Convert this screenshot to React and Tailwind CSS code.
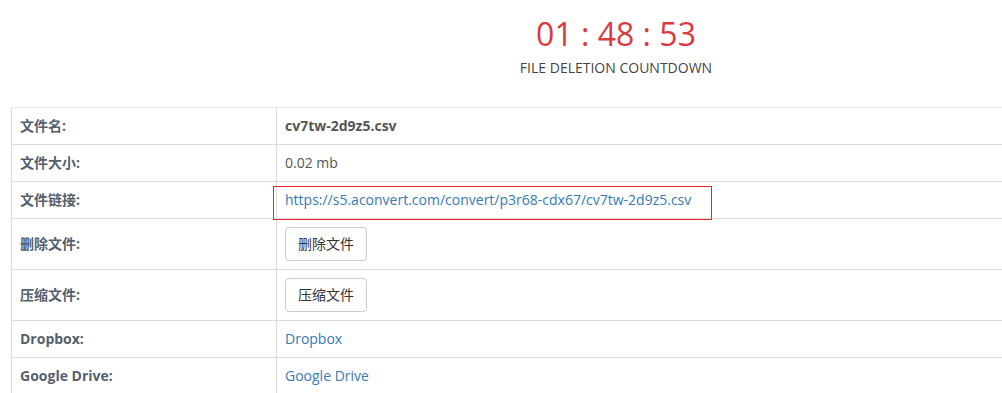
import React from "react";

const font = { fontFamily: '"Open Sans", "Noto Sans CJK SC", sans-serif' };

function Row({ label, children, first }) {
  return (
    <tr className={first ? "border-t border-[#e6e6e6]" : "border-t border-[#dddddd]"}>
      <td className="w-[265px] border-r border-[#dddddd] px-2 py-2 align-middle text-[14px] leading-5 font-bold text-[#54606e]">
        {label}
      </td>
      <td className="px-2 py-2 align-middle text-[14px] leading-5 text-[#555555]">{children}</td>
    </tr>
  );
}

function Btn({ children }) {
  return (
    <button className="h-[34px] w-[82px] rounded-[4px] border border-[#cccccc] bg-white text-[14px] text-[#333333]">
      {children}
    </button>
  );
}

export default function App() {
  return (
    <div className="relative h-[393px] w-[1002px] overflow-hidden bg-white" style={font}>
      <div className="flex h-[107px] flex-col items-center pl-[230px] pt-[11px]">
        <div className="text-[32px] leading-[46px] text-[#dc3a3f]">01 : 48 : 53</div>
        <div className="mt-[1px] text-[14px] leading-5 text-[#444444]">FILE DELETION COUNTDOWN</div>
      </div>
      <div className="pl-[11px]">
        <table className="w-[1010px] border-collapse border-l border-[#dddddd]">
          <tbody>
            <Row label="文件名:" first>
              <span className="font-bold text-[#555555]">cv7tw-2d9z5.csv</span>
            </Row>
            <Row label="文件大小:">0.02 mb</Row>
            <Row label="文件链接:">
              <a className="text-[#337ab7]">https://s5.aconvert.com/convert/p3r68-cdx67/cv7tw-2d9z5.csv</a>
            </Row>
            <Row label="删除文件:">
              <Btn>删除文件</Btn>
            </Row>
            <Row label="压缩文件:">
              <Btn>压缩文件</Btn>
            </Row>
            <Row label="Dropbox:">
              <a className="text-[#337ab7]">Dropbox</a>
            </Row>
            <Row label="Google Drive:">
              <a className="text-[#337ab7]">Google Drive</a>
            </Row>
          </tbody>
        </table>
      </div>
      <div className="absolute left-[273px] top-[186px] h-[34px] w-[439px] border border-[#e8262b]" />
    </div>
  );
}
